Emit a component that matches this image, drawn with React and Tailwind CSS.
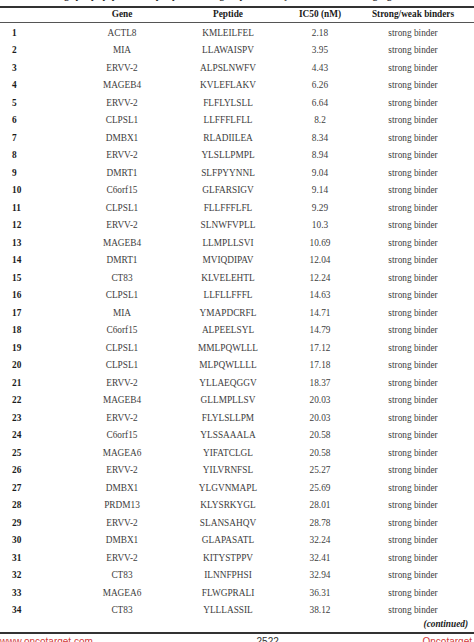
import React from 'react';

const rows = [
  ['ACTL8', 'KMLEILFEL', '2.18'],
  ['MIA', 'LLAWAISPV', '3.95'],
  ['ERVV-2', 'ALPSLNWFV', '4.43'],
  ['MAGEB4', 'KVLEFLAKV', '6.26'],
  ['ERVV-2', 'FLFLYLSLL', '6.64'],
  ['CLPSL1', 'LLFFFLFLL', '8.2'],
  ['DMBX1', 'RLADIILEA', '8.34'],
  ['ERVV-2', 'YLSLLPMPL', '8.94'],
  ['DMRT1', 'SLFPYYNNL', '9.04'],
  ['C6orf15', 'GLFARSIGV', '9.14'],
  ['CLPSL1', 'FLLFFFLFL', '9.29'],
  ['ERVV-2', 'SLNWFVPLL', '10.3'],
  ['MAGEB4', 'LLMPLLSVI', '10.69'],
  ['DMRT1', 'MVIQDIPAV', '12.04'],
  ['CT83', 'KLVELEHTL', '12.24'],
  ['CLPSL1', 'LLFLLFFFL', '14.63'],
  ['MIA', 'YMAPDCRFL', '14.71'],
  ['C6orf15', 'ALPEELSYL', '14.79'],
  ['CLPSL1', 'MMLPQWLLL', '17.12'],
  ['CLPSL1', 'MLPQWLLLL', '17.18'],
  ['ERVV-2', 'YLLAEQGGV', '18.37'],
  ['MAGEB4', 'GLLMPLLSV', '20.03'],
  ['ERVV-2', 'FLYLSLLPM', '20.03'],
  ['C6orf15', 'YLSSAAALA', '20.58'],
  ['MAGEA6', 'YIFATCLGL', '20.58'],
  ['ERVV-2', 'YILVRNFSL', '25.27'],
  ['DMBX1', 'YLGVNMAPL', '25.69'],
  ['PRDM13', 'KLYSRKYGL', '28.01'],
  ['ERVV-2', 'SLANSAHQV', '28.78'],
  ['DMBX1', 'GLAPASATL', '32.24'],
  ['ERVV-2', 'KITYSTPPV', '32.41'],
  ['CT83', 'ILNNFPHSI', '32.94'],
  ['MAGEA6', 'FLWGPRALI', '36.31'],
  ['CT83', 'YLLLASSIL', '38.12'],
];

const cols = 'grid grid-cols-[70px_104px_108px_76px_110px]';

export default function App() {
  return (
    <div className="w-[474px] h-[642px] overflow-hidden bg-white text-[9.3px] text-[#3d3d3d]" style={{ fontFamily: '"Liberation Serif", "Times New Roman", serif' }}>
      {/* caption clipped at the top edge: only descenders remain */}
      <div className="h-[6px] overflow-hidden">
        <div className="-mt-[9px] pl-[8px] leading-[10px] font-bold text-[#222] whitespace-nowrap">
          Table 2: Strong epitope peptides of top expressed antigens predicted by HLA-A*0201 binding algorithm
        </div>
      </div>

      <div className="h-[2px] bg-[#333]" />

      {/* header */}
      <div className={`${cols} h-[14px] items-center font-bold text-[#1a1a1a] leading-none`}>
        <div />
        <div className="text-center">Gene</div>
        <div className="text-center">Peptide</div>
        <div className="text-center">IC50 (nM)</div>
        <div className="text-center">Strong/weak binders</div>
      </div>
      <div className="h-px bg-[#555]" />

      <div className="pt-[1.8px]">
        {rows.map((r, i) => (
          <div key={i} className={`${cols} h-[17.5px] items-center leading-none`}>
            <div className="pl-[12px] font-bold text-[#1a1a1a]">{i + 1}</div>
            <div className="text-center">{r[0]}</div>
            <div className="text-center">{r[1]}</div>
            <div className="text-center">{r[2]}</div>
            <div className="text-center">strong binder</div>
          </div>
        ))}
      </div>

      <div className="h-[10px] flex items-center justify-end pr-[6px] font-bold italic text-[#1a1a1a] leading-none">
        (continued)
      </div>
      <div className="mt-[2px] h-[2px] bg-[#333]" />

      {/* footer */}
      <div className="mt-[3px] flex items-start justify-between leading-none text-[10px]" style={{ fontFamily: '"Liberation Sans", Arial, sans-serif' }}>
        <span className="text-[#d23a3a]">www.oncotarget.com</span>
        <span className="text-[#333] pl-[20px]">2522</span>
        <span className="text-[#d23a3a] pr-[2px]">Oncotarget</span>
      </div>
    </div>
  );
}
